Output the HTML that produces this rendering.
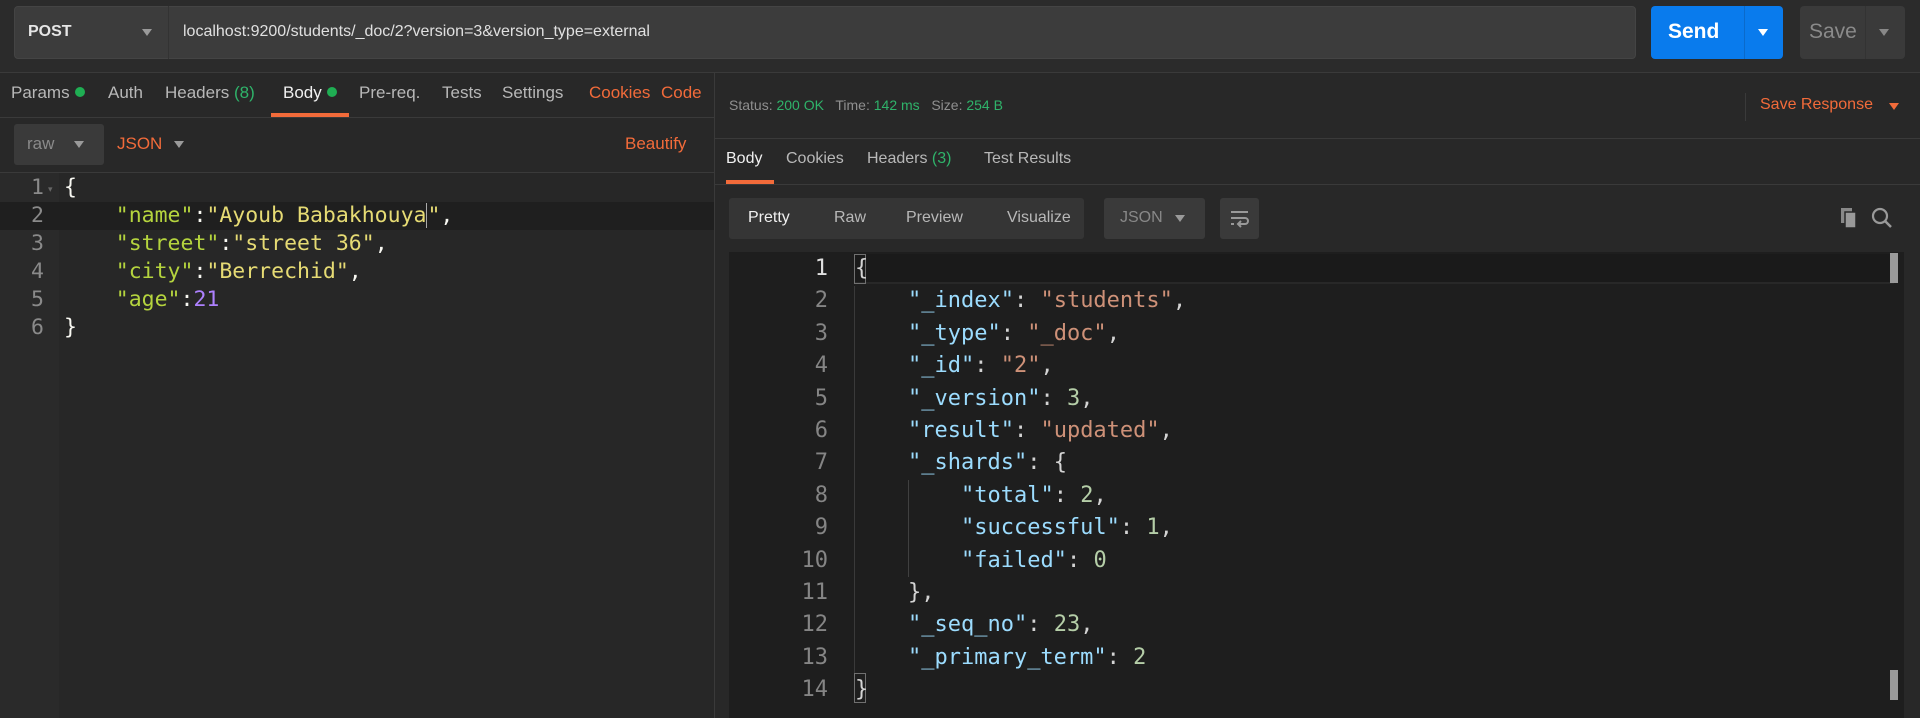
<!DOCTYPE html>
<html><head><meta charset="utf-8"><style>
*{margin:0;padding:0;box-sizing:border-box}
body{width:1920px;height:718px;background:#282828;position:relative;overflow:hidden;font-family:"Liberation Sans Narrow","Liberation Sans",sans-serif;color:#b8b8b8;font-size:16px}
.a{position:absolute;white-space:pre}
.mono{font-family:"DejaVu Sans Mono","Liberation Mono",monospace;font-size:21.5px}
.or{color:#f26b3a}.gr{color:#2fb36a}
.dot{display:inline-block;width:10px;height:10px;border-radius:50%;background:#1fae53;margin-left:5px;vertical-align:1px}
.tri{position:absolute;display:block;width:0;height:0;border-left:5px solid transparent;border-right:5px solid transparent;border-top:7px solid #9a9a9a}
</style></head><body>
<div class="a" style="left:0;top:0;width:1920px;height:73px;background:#2b2b2b;border-bottom:1px solid #3a3a3a"></div>
<div class="a" style="left:14px;top:6px;width:1622px;height:53px;background:#3c3c3c;border-radius:4px;border:1px solid #444"></div>
<div class="a" style="left:168px;top:6px;width:1px;height:53px;background:#333"></div>
<div class="a" style="left:28px;top:23px;color:#e6e6e6;font-weight:bold;font-size:16px">POST</div>
<div class="tri" style="left:142px;top:29px"></div>
<div class="a" style="left:183px;top:23px;color:#e0e0e0;font-size:16px">localhost:9200/students/_doc/2?version=3&amp;version_type=external</div>
<div class="a" style="left:1651px;top:6px;width:132px;height:53px;background:#097bed;border-radius:4px"></div>
<div class="a" style="left:1744px;top:6px;width:1px;height:53px;background:#0a6acb"></div>
<div class="a" style="left:1668px;top:20px;color:#fff;font-size:21px;font-weight:bold">Send</div>
<div class="tri" style="left:1758px;top:29px;border-top-color:#fff"></div>
<div class="a" style="left:1800px;top:6px;width:105px;height:53px;background:#3a3a3a;border-radius:4px"></div>
<div class="a" style="left:1865px;top:6px;width:1px;height:53px;background:#333"></div>
<div class="a" style="left:1809px;top:20px;color:#8a8a8a;font-size:21px">Save</div>
<div class="tri" style="left:1879px;top:29px;border-top-color:#888"></div>
<div class="a" style="left:714px;top:73px;width:1px;height:645px;background:#3a3a3a"></div>
<div class="a" style="left:0;top:117px;width:714px;height:1px;background:#3a3a3a"></div>
<div class="a" style="left:11px;top:83px;font-size:17px">Params<span class="dot"></span></div>
<div class="a" style="left:108px;top:83px;font-size:17px">Auth</div>
<div class="a" style="left:165px;top:83px;font-size:17px">Headers <span class="gr">(8)</span></div>
<div class="a" style="left:283px;top:83px;font-size:17px;color:#f0f0f0">Body<span class="dot"></span></div>
<div class="a" style="left:359px;top:83px;font-size:17px">Pre-req.</div>
<div class="a" style="left:442px;top:83px;font-size:17px">Tests</div>
<div class="a" style="left:502px;top:83px;font-size:17px">Settings</div>
<div class="a or" style="left:589px;top:83px;font-size:17px">Cookies</div>
<div class="a or" style="left:661px;top:83px;font-size:17px">Code</div>
<div class="a" style="left:271px;top:113px;width:78px;height:4px;background:#f26b3a"></div>
<div class="a" style="left:14px;top:124px;width:90px;height:41px;background:#3a3a3a;border-radius:3px"></div>
<div class="a" style="left:27px;top:134px;color:#8a8a8a;font-size:17px">raw</div>
<div class="tri" style="left:74px;top:141px"></div>
<div class="a or" style="left:117px;top:134px;font-size:17px">JSON</div>
<div class="tri" style="left:174px;top:141px"></div>
<div class="a or" style="left:625px;top:134px;font-size:17px">Beautify</div>
<div class="a" style="left:0;top:172px;width:714px;height:546px;background:#272727;border-top:1px solid #3a3a3a"></div>
<div class="a" style="left:0;top:173px;width:59px;height:545px;background:#2a2a2a"></div>
<div class="a" style="left:0;top:202px;width:714px;height:28px;background:#1f1f1f"></div>
<div class="a mono" style="left:0;top:174px;width:44px;text-align:right;color:#8a8a8a;line-height:28px">1
2
3
4
5
6</div>
<div class="a" style="left:48px;top:184px;font-size:9px;color:#666">▾</div>
<div class="a mono" style="left:64px;top:174px;line-height:28px;color:#f8f8f2">{
    <span style="color:#b5d43e">"name"</span>:<span style="color:#e6db74">"Ayoub Babakhouya</span><span style="border-left:1px solid #aaa"></span><span style="color:#e6db74">"</span>,
    <span style="color:#b5d43e">"street"</span>:<span style="color:#e6db74">"street 36"</span>,
    <span style="color:#b5d43e">"city"</span>:<span style="color:#e6db74">"Berrechid"</span>,
    <span style="color:#b5d43e">"age"</span>:<span style="color:#ae81ff">21</span>
}</div>
<div class="a" style="left:715px;top:138px;width:1205px;height:1px;background:#3a3a3a"></div>
<div class="a" style="left:715px;top:184px;width:1205px;height:1px;background:#3a3a3a"></div>
<div class="a" style="left:729px;top:97px;font-size:14px;color:#8f8f8f">Status: <span class="gr">200 OK</span>   Time: <span class="gr">142 ms</span>   Size: <span class="gr">254 B</span></div>
<div class="a" style="left:1745px;top:93px;width:1px;height:28px;background:#3a3a3a"></div>
<div class="a or" style="left:1760px;top:96px;font-size:16px">Save Response</div>
<div class="tri" style="left:1889px;top:103px;border-top-color:#f26b3a"></div>
<div class="a" style="left:726px;top:150px;font-size:16px;color:#f0f0f0">Body</div>
<div class="a" style="left:786px;top:150px;font-size:16px">Cookies</div>
<div class="a" style="left:867px;top:150px;font-size:16px">Headers <span class="gr">(3)</span></div>
<div class="a" style="left:984px;top:150px;font-size:16px">Test Results</div>
<div class="a" style="left:726px;top:180px;width:48px;height:4px;background:#f26b3a"></div>
<div class="a" style="left:729px;top:198px;width:355px;height:41px;background:#353535;border-radius:3px"></div>
<div class="a" style="left:748px;top:209px;font-size:16px;color:#f0f0f0">Pretty</div>
<div class="a" style="left:834px;top:209px;font-size:16px">Raw</div>
<div class="a" style="left:906px;top:209px;font-size:16px">Preview</div>
<div class="a" style="left:1007px;top:209px;font-size:16px">Visualize</div>
<div class="a" style="left:1104px;top:198px;width:101px;height:41px;background:#3a3a3a;border-radius:3px"></div>
<div class="a" style="left:1120px;top:209px;font-size:16px;color:#888">JSON</div>
<div class="tri" style="left:1175px;top:215px"></div>
<div class="a" style="left:1220px;top:198px;width:39px;height:41px;background:#3a3a3a;border-radius:3px"></div>
<svg class="a" style="left:1228px;top:207px" width="24" height="24" viewBox="0 0 24 24"><path d="M3 5h17M3 11h14a3 3 0 0 1 0 6h-6M13 14l-3 3 3 3M3 17h3" stroke="#999" stroke-width="2" fill="none"/></svg>
<svg class="a" style="left:1838px;top:206px" width="22" height="24" viewBox="0 0 22 24"><rect x="3" y="2" width="11" height="15" fill="#888"/><rect x="7" y="6" width="11" height="16" fill="#999" stroke="#282828" stroke-width="1.5"/></svg>
<svg class="a" style="left:1870px;top:206px" width="24" height="24" viewBox="0 0 24 24"><circle cx="10" cy="10" r="7" stroke="#999" stroke-width="2.2" fill="none"/><path d="M15 15l6 6" stroke="#999" stroke-width="2.5"/></svg>
<div class="a" style="left:729px;top:252px;width:1175px;height:466px;background:#1e1e1e"></div>
<div class="a" style="left:854px;top:254px;width:1040px;height:30px;background:#1a1a1a;border-bottom:2px solid #282828"></div>
<div class="a" style="left:1890px;top:253px;width:8px;height:30px;background:#9a9a9a"></div>
<div class="a" style="left:1890px;top:670px;width:8px;height:30px;background:#9a9a9a"></div>
<div class="a" style="left:854px;top:286px;width:1px;height:412px;background:#3a3a3a"></div>
<div class="a" style="left:908px;top:480px;width:1px;height:97px;background:#404040"></div>
<div class="a" style="left:854px;top:254px;width:12px;height:30px;border:1px solid #707070"></div>
<div class="a" style="left:854px;top:673px;width:12px;height:30px;border:1px solid #707070"></div>
<div class="a mono" style="left:760px;top:253px;width:68px;text-align:right;color:#858585;line-height:32.4px;font-size:22px"><span style="color:#e0e0e0">1</span>
2
3
4
5
6
7
8
9
10
11
12
13
14</div>
<div class="a mono" style="left:855px;top:253px;line-height:32.4px;color:#d4d4d4;font-size:22px">{
    <span style="color:#9cdcfe">"_index"</span>: <span style="color:#ce9178">"students"</span>,
    <span style="color:#9cdcfe">"_type"</span>: <span style="color:#ce9178">"_doc"</span>,
    <span style="color:#9cdcfe">"_id"</span>: <span style="color:#ce9178">"2"</span>,
    <span style="color:#9cdcfe">"_version"</span>: <span style="color:#b5cea8">3</span>,
    <span style="color:#9cdcfe">"result"</span>: <span style="color:#ce9178">"updated"</span>,
    <span style="color:#9cdcfe">"_shards"</span>: {
        <span style="color:#9cdcfe">"total"</span>: <span style="color:#b5cea8">2</span>,
        <span style="color:#9cdcfe">"successful"</span>: <span style="color:#b5cea8">1</span>,
        <span style="color:#9cdcfe">"failed"</span>: <span style="color:#b5cea8">0</span>
    },
    <span style="color:#9cdcfe">"_seq_no"</span>: <span style="color:#b5cea8">23</span>,
    <span style="color:#9cdcfe">"_primary_term"</span>: <span style="color:#b5cea8">2</span>
}</div>
</body></html>
